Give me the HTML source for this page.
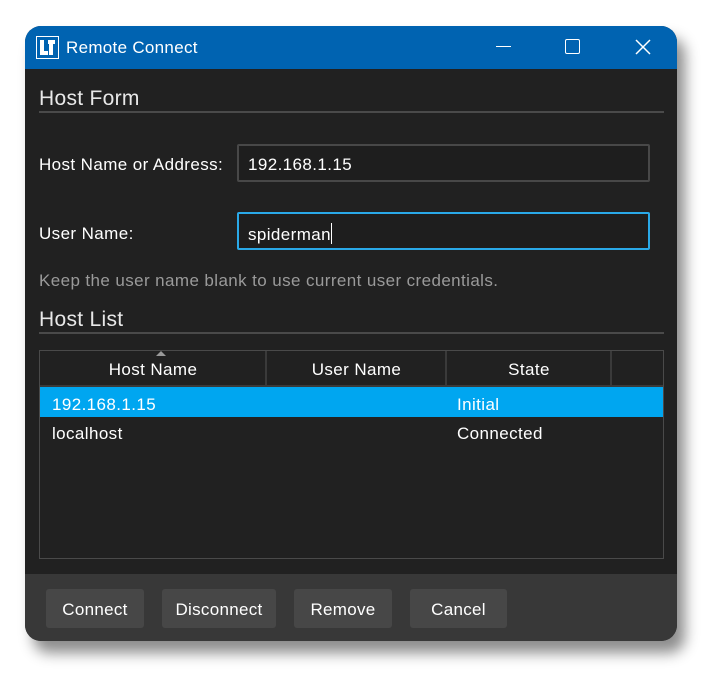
<!DOCTYPE html>
<html><head><meta charset="utf-8"><style>
*{margin:0;padding:0;box-sizing:border-box}
body{width:718px;height:683px;background:#fff;position:relative;overflow:hidden;font-family:"Liberation Sans",sans-serif;color:#fff}
.a{position:absolute;white-space:nowrap}
#win{position:absolute;left:25px;top:26px;width:652px;height:615px;border-radius:16px;background:#212121;overflow:hidden;box-shadow:8px 12px 14px rgba(0,0,0,.45)}
.t{font-size:17px;letter-spacing:0.4px}
.ln{position:absolute;height:2px;background:#4a4a4a}
.btn{position:absolute;top:589px;height:39px;background:#474747;border-radius:3px;font-size:17px;letter-spacing:0.3px;text-align:center;line-height:41px}
.vd{position:absolute;top:351px;width:2px;height:35px;background:#3a3a3a}
</style></head><body>
<div id="win"></div>
<div class="a" style="left:25px;top:26px;width:652px;height:43px;background:#0063b1;border-radius:16px 16px 0 0"></div>
<svg class="a" style="left:36px;top:36px" width="23" height="23" viewBox="0 0 23 23"><rect x="0.5" y="0.5" width="22" height="22" fill="none" stroke="#fff"/><path d="M4 4h4v11h4v4H4z M12 4h7v4h-2v11h-4V8h-1z" fill="#fff"/></svg>
<div class="a t" style="left:66px;top:38px;font-size:17px;letter-spacing:0.3px">Remote Connect</div>
<div class="a" style="left:496px;top:46px;width:15px;height:1px;background:#fff"></div>
<div class="a" style="left:565px;top:39px;width:15px;height:15px;border:1.5px solid #fff;border-radius:2px"></div>
<svg class="a" style="left:635px;top:39px" width="16" height="16"><path d="M1 1L15 15M15 1L1 15" stroke="#fff" stroke-width="1.5"/></svg>

<div class="a" style="left:39px;top:87px;font-size:21px;letter-spacing:0.3px;color:#e8e8e8">Host Form</div>
<div class="ln" style="left:39px;top:111px;width:625px"></div>
<div class="a t" style="left:39px;top:155px">Host Name or Address:</div>
<div class="a" style="left:237px;top:144px;width:413px;height:38px;border:2px solid #484848;border-radius:2px;background:#1e1e1e"></div>
<div class="a t" style="left:248px;top:155px">192.168.1.15</div>
<div class="a t" style="left:39px;top:224px">User Name:</div>
<div class="a" style="left:237px;top:212px;width:413px;height:38px;border:2px solid #2aa9e8;border-radius:2px;background:#1e1e1e"></div>
<div class="a t" style="left:248px;top:223px">spiderman<span style="display:inline-block;width:1px;height:21px;background:#fff;vertical-align:-4px"></span></div>
<div class="a t" style="left:39px;top:271px;color:#9a9a9a">Keep the user name blank to use current user credentials.</div>
<div class="a" style="left:39px;top:308px;font-size:21px;letter-spacing:0.3px;color:#e8e8e8">Host List</div>
<div class="ln" style="left:39px;top:332px;width:625px"></div>

<div class="a" style="left:39px;top:350px;width:625px;height:209px;border:1px solid #4a4a4a"></div>
<div class="a" style="left:40px;top:385px;width:623px;height:2px;background:#3a3a3a"></div>
<div class="vd" style="left:265px"></div><div class="vd" style="left:445px"></div><div class="vd" style="left:610px"></div>
<svg class="a" style="left:156px;top:351px" width="10" height="5"><path d="M0 5L5 0L10 5z" fill="#999"/></svg>
<div class="a t" style="left:40px;width:226px;text-align:center;top:360px">Host Name</div>
<div class="a t" style="left:267px;width:179px;text-align:center;top:360px">User Name</div>
<div class="a t" style="left:447px;width:164px;text-align:center;top:360px">State</div>
<div class="a" style="left:40px;top:387px;width:623px;height:30px;background:#00a6f0"></div>
<div class="a t" style="left:52px;top:395px">192.168.1.15</div>
<div class="a t" style="left:457px;top:395px">Initial</div>
<div class="a t" style="left:52px;top:424px">localhost</div>
<div class="a t" style="left:457px;top:424px">Connected</div>

<div class="a" style="left:25px;top:574px;width:652px;height:67px;background:#383838;border-radius:0 0 16px 16px"></div>
<div class="btn" style="left:46px;width:98px">Connect</div>
<div class="btn" style="left:162px;width:114px">Disconnect</div>
<div class="btn" style="left:294px;width:98px">Remove</div>
<div class="btn" style="left:410px;width:97px">Cancel</div>
</body></html>
